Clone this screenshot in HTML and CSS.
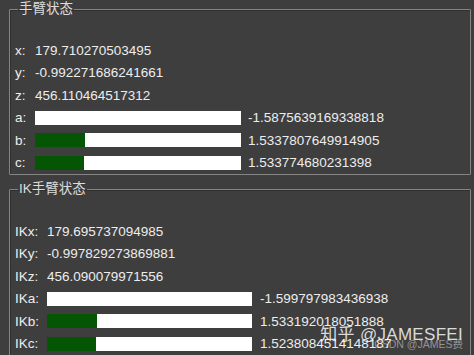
FILE: index.html
```html
<!DOCTYPE html>
<html lang="zh">
<head>
  <meta charset="UTF-8" />
  <meta name="viewport" content="width=device-width, initial-scale=1.0" />
  <title>手臂状态</title>
  <link rel="stylesheet" href="styles.css">
</head>
<body>
  <fieldset class="group">
    <legend>手臂状态</legend>
    <div class="rows">
      <span class="label">x:</span><span class="value wide">179.710270503495</span>
      <span class="label">y:</span><span class="value wide">-0.992271686241661</span>
      <span class="label">z:</span><span class="value wide">456.110464517312</span>
      <span class="label">a:</span><div class="bar"><div class="chunk" style="width: 0%"></div></div><span class="value">-1.5875639169338818</span>
      <span class="label">b:</span><div class="bar"><div class="chunk" style="width: 24.5%"></div></div><span class="value">1.5337807649914905</span>
      <span class="label">c:</span><div class="bar"><div class="chunk" style="width: 24%"></div></div><span class="value">1.533774680231398</span>
    </div>
  </fieldset>

  <fieldset class="group ik">
    <legend>IK手臂状态</legend>
    <div class="rows">
      <span class="label">IKx:</span><span class="value wide">179.695737094985</span>
      <span class="label">IKy:</span><span class="value wide">-0.997829273869881</span>
      <span class="label">IKz:</span><span class="value wide">456.090079971556</span>
      <span class="label">IKa:</span><div class="bar"><div class="chunk" style="width: 0%"></div></div><span class="value">-1.599797983436938</span>
      <span class="label">IKb:</span><div class="bar"><div class="chunk" style="width: 24.5%"></div></div><span class="value">1.533192018051888</span>
      <span class="label">IKc:</span><div class="bar"><div class="chunk" style="width: 24%"></div></div><span class="value">1.5238084514148187</span>
    </div>
  </fieldset>

  <div class="watermark">
    <span class="zhihu">知乎 @JAMESFEI</span>
    <span class="csdn">CSDN @JAMES费</span>
  </div>
</body>
</html>
```

FILE: styles.css
```css
body {
  font-family: "Liberation Sans", "Noto Sans CJK SC", sans-serif;
  font-size: 13.5px;
  background-color: #3e3e3e;
  color: #ededed;
  margin: 0;
  padding: 0 3px 0 9px;
  height: 355px;
  overflow: hidden;
  position: relative;
}

.group {
  margin: 0;
  padding: 21px 0 0 5px;
  border: 1px solid #858585;
  border-radius: 1px;
  box-shadow: inset 1px 1px 0 #2f2f2f;
  min-inline-size: 0;
}
.group legend {
  margin-left: 3px;
  padding: 0 1px;
  line-height: 18px;
  color: #dcdcdc;
}
.group.ik {
  margin-top: 5px;
  padding-top: 22px;
}

.rows {
  display: grid;
  grid-template-columns: 20px 206px auto;
  grid-auto-rows: 22.5px;
  align-items: center;
}
.ik .rows {
  grid-template-columns: 32px 205px auto;
}

.label {
  white-space: nowrap;
}
.value {
  padding-left: 7px;
  white-space: nowrap;
}
.value.wide {
  grid-column: 2 / 4;
  padding-left: 0;
}
.ik .value {
  padding-left: 8px;
}
.ik .value.wide {
  padding-left: 0;
}

.bar {
  height: 14px;
  background-color: #ffffff;
  display: flex;
}
.chunk {
  background-color: #045504;
  height: 100%;
}

/* site watermarks burned into the screenshot */
.watermark {
  position: absolute;
  right: 11px;
  bottom: 5px;
  display: flex;
  flex-direction: column;
  align-items: flex-end;
}
.zhihu {
  font-size: 17px;
  line-height: 17px;
  color: rgba(255, 255, 255, 0.82);
  letter-spacing: 0.3px;
  position: relative;
  top: 3px;
}
.csdn {
  font-size: 10.5px;
  line-height: 11px;
  color: rgba(255, 255, 255, 0.45);
  margin-top: -1px;
}
```
